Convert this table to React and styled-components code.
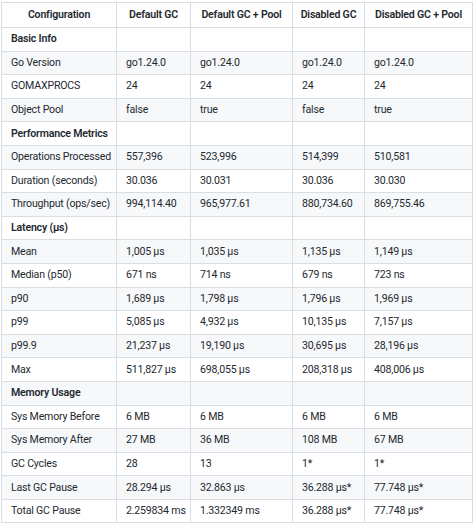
import React from "react";
import styled, { createGlobalStyle } from "styled-components";

const Global = createGlobalStyle`
  html, body { margin: 0; padding: 0; background: #ffffff; }
  body { font-family: "Roboto", "Open Sans", sans-serif; color: #24292f; }
`;

const Wrap = styled.div`
  padding: 2px 0 0 1px;
`;

const Table = styled.table`
  width: 471px;
  border-collapse: collapse;
  table-layout: fixed;
  font-size: 10.6px;
  letter-spacing: -0.2px;
`;

const HeadCell = styled.th`
  height: 24px;
  padding: 0 6px;
  border: 1px solid #d8dee4;
  font-weight: 600;
  text-align: center;
  white-space: nowrap;
  overflow: hidden;
  line-height: 14px;
`;

const Row = styled.tr`
  background: ${(p) => (p.$striped ? "#f6f8fa" : "#ffffff")};
`;

const Cell = styled.td`
  height: 22.6px;
  padding: 0 8px 0 9px;
  border: 1px solid #d8dee4;
  text-align: left;
  white-space: nowrap;
  overflow: hidden;
  line-height: 14px;
  font-weight: ${(p) => (p.$section ? 600 : 400)};
`;

const headers = ["Configuration", "Default GC", "Default GC + Pool", "Disabled GC", "Disabled GC + Pool"];
const widths = [115, 74, 102, 72, 108];

const rows = [
  { section: "Basic Info" },
  ["Go Version", "go1.24.0", "go1.24.0", "go1.24.0", "go1.24.0"],
  ["GOMAXPROCS", "24", "24", "24", "24"],
  ["Object Pool", "false", "true", "false", "true"],
  { section: "Performance Metrics" },
  ["Operations Processed", "557,396", "523,996", "514,399", "510,581"],
  ["Duration (seconds)", "30.036", "30.031", "30.036", "30.030"],
  ["Throughput (ops/sec)", "994,114.40", "965,977.61", "880,734.60", "869,755.46"],
  { section: "Latency (µs)" },
  ["Mean", "1,005 µs", "1,035 µs", "1,135 µs", "1,149 µs"],
  ["Median (p50)", "671 ns", "714 ns", "679 ns", "723 ns"],
  ["p90", "1,689 µs", "1,798 µs", "1,796 µs", "1,969 µs"],
  ["p99", "5,085 µs", "4,932 µs", "10,135 µs", "7,157 µs"],
  ["p99.9", "21,237 µs", "19,190 µs", "30,695 µs", "28,196 µs"],
  ["Max", "511,827 µs", "698,055 µs", "208,318 µs", "408,006 µs"],
  { section: "Memory Usage" },
  ["Sys Memory Before", "6 MB", "6 MB", "6 MB", "6 MB"],
  ["Sys Memory After", "27 MB", "36 MB", "108 MB", "67 MB"],
  ["GC Cycles", "28", "13", "1*", "1*"],
  ["Last GC Pause", "28.294 µs", "32.863 µs", "36.288 µs*", "77.748 µs*"],
  ["Total GC Pause", "2.259834 ms", "1.332349 ms", "36.288 µs*", "77.748 µs*"],
];

export default function App() {
  return (
    <Wrap>
      <Global />
      <Table>
        <colgroup>
          {widths.map((w, i) => (
            <col key={i} style={{ width: w }} />
          ))}
        </colgroup>
        <thead>
          <tr>
            {headers.map((h) => (
              <HeadCell key={h}>{h}</HeadCell>
            ))}
          </tr>
        </thead>
        <tbody>
          {rows.map((r, i) => (
            <Row key={i} $striped={i % 2 === 1}>
              {Array.isArray(r) ? (
                r.map((c, j) => <Cell key={j}>{c}</Cell>)
              ) : (
                <>
                  <Cell $section>{r.section}</Cell>
                  <Cell />
                  <Cell />
                  <Cell />
                  <Cell />
                </>
              )}
            </Row>
          ))}
        </tbody>
      </Table>
    </Wrap>
  );
}
